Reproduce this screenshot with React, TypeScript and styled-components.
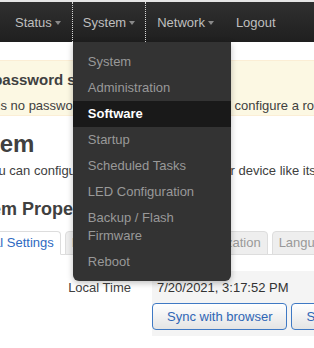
import React from 'react'
import styled, { createGlobalStyle } from 'styled-components'

const GlobalStyle = createGlobalStyle`
  body {
    margin: 0;
    background: #fff;
    font-family: 'Liberation Sans', Arial, sans-serif;
    font-size: 13px;
    color: #404040;
  }
`

const menuItems = [
  'System',
  'Administration',
  'Software',
  'Startup',
  'Scheduled Tasks',
  'LED Configuration',
  'Backup / Flash Firmware',
  'Reboot',
]

const tabs = ['General Settings', 'Logging', 'Time Synchronization', 'Language and Style']

const App: React.FC = () => {
  return (
    <Page>
      <GlobalStyle />
      <TopStrip />
      <NavBar>
        <NavItem>
          Status
          <Caret />
        </NavItem>
        <NavItem focused>
          System
          <Caret />
          <Dropdown>
            {menuItems.map((label) => (
              <MenuItem key={label} active={label === 'Software'}>
                {label}
              </MenuItem>
            ))}
          </Dropdown>
        </NavItem>
        <NavItem>
          Network
          <Caret />
        </NavItem>
        <NavItem>Logout</NavItem>
      </NavBar>

      <Main>
        <Alert>
          <AlertTitle>No password set!</AlertTitle>
          <AlertText>
            There is no password set on this router. Please configure a root password to protect
            the web interface.
          </AlertText>
        </Alert>

        <PageTitle>System</PageTitle>
        <Description>
          Here you can configure the basic aspects of your device like its hostname or the
          timezone.
        </Description>

        <SectionTitle>System Properties</SectionTitle>
        <TabList>
          {tabs.map((t, i) => (
            <Tab key={t} active={i === 0}>
              {t}
            </Tab>
          ))}
        </TabList>

        <FieldRow>
          <FieldLabel>Local Time</FieldLabel>
          <FieldBox>
            <FieldValue>7/20/2021, 3:17:52 PM</FieldValue>
            <ButtonRow>
              <Button>Sync with browser</Button>
              <Button>Sync with NTP-Server</Button>
            </ButtonRow>
          </FieldBox>
        </FieldRow>
      </Main>
    </Page>
  )
}

export default App

const Page = styled.div`
  width: 314px;
  height: 348px;
  overflow: hidden;
  position: relative;
`

const TopStrip = styled.div`
  height: 2px;
  background: #e6e6e6;
`

const NavBar = styled.nav`
  height: 40px;
  display: flex;
  padding-left: 4px;
  background: linear-gradient(to bottom, #303030, #1f1f1f);
  position: relative;
  z-index: 5;
`

const NavItem = styled.div<{ focused?: boolean }>`
  position: relative;
  display: flex;
  align-items: center;
  height: 40px;
  padding: 0 11px;
  color: #bfbfbf;
  white-space: nowrap;

  &::before {
    content: '';
    display: ${({ focused }) => (focused ? 'block' : 'none')};
    position: absolute;
    top: 0;
    bottom: 0;
    left: 0;
    right: 0;
    border-left: 1px dotted #d8d8d8;
    border-right: 1px dotted #d8d8d8;
  }
`

const Caret = styled.span`
  width: 0;
  height: 0;
  margin-left: 3px;
  margin-top: 1px;
  border-left: 3.5px solid transparent;
  border-right: 3.5px solid transparent;
  border-top: 4px solid #fff;
  opacity: 0.45;
`

const Dropdown = styled.div`
  position: absolute;
  top: 40px;
  left: 1px;
  width: 158px;
  padding: 7px 0 6px;
  background: #333;
  border-radius: 0 0 6px 6px;
  box-shadow: 0 2px 6px rgba(0, 0, 0, 0.25);
  white-space: normal;
`

const MenuItem = styled.div<{ active?: boolean }>`
  padding: 4px 15px;
  line-height: 18px;
  color: ${({ active }) => (active ? '#fff' : '#999')};
  background: ${({ active }) => (active ? '#191919' : 'transparent')};
  font-weight: ${({ active }) => (active ? 'bold' : 'normal')};
`

const Main = styled.main`
  margin-left: -47px;
  width: 1000px;
  padding-top: 18px;
  white-space: nowrap;
`

const Alert = styled.div`
  background: #fcf8e3;
  border: 1px solid #fbeed5;
  padding: 8px 14px 0 6px;
`

const AlertTitle = styled.h4`
  margin: 0;
  font-size: 15px;
  line-height: 22px;
  text-indent: 9px;
  color: #404040;
`

const AlertText = styled.p`
  margin: 6px 0 0;
  line-height: 18px;
`

const PageTitle = styled.h2`
  margin: 10px 0 0 -4px;
  font-size: 24px;
  line-height: 36px;
  color: #404040;
`

const Description = styled.p`
  margin: 0;
  line-height: 18px;
`

const SectionTitle = styled.h3`
  margin: 16px 0 0;
  font-size: 18px;
  line-height: 27px;
  color: #404040;
`

const TabList = styled.ul`
  display: flex;
  margin: 8px 0 0 -3px;
  padding: 0;
  list-style: none;
  border-bottom: 1px solid #ddd;
`

const Tab = styled.li<{ active?: boolean }>`
  margin: 0 4px -1px 0;
  padding: 0 6px;
  line-height: 22px;
  border: 1px solid #ddd;
  border-bottom-color: ${({ active }) => (active ? '#fff' : '#ddd')};
  border-radius: 4px 4px 0 0;
  background: ${({ active }) => (active ? '#fff' : '#eee')};
  color: ${({ active }) => (active ? '#2f6ac2' : '#999')};
`

const FieldRow = styled.div`
  display: flex;
  gap: 21px;
  margin-top: 16px;
`

const FieldLabel = styled.div`
  width: 178px;
  padding-top: 8px;
  line-height: 18px;
  text-align: right;
`

const FieldBox = styled.div`
  flex: 1;
  padding: 8px 0 6px;
  background: #f4f4f4;
`

const FieldValue = styled.div`
  padding-left: 5px;
  line-height: 18px;
  color: #333;
`

const ButtonRow = styled.div`
  display: flex;
  gap: 4px;
  margin-top: 6px;
`

const Button = styled.button`
  height: 27px;
  padding: 0 14px;
  border: 1px solid #3f79c4;
  border-radius: 4px;
  background: linear-gradient(to bottom, #fff, #e4e4e4);
  color: #2f66b6;
  font-family: 'Liberation Sans', Arial, sans-serif;
  font-size: 13px;
  white-space: nowrap;
`
